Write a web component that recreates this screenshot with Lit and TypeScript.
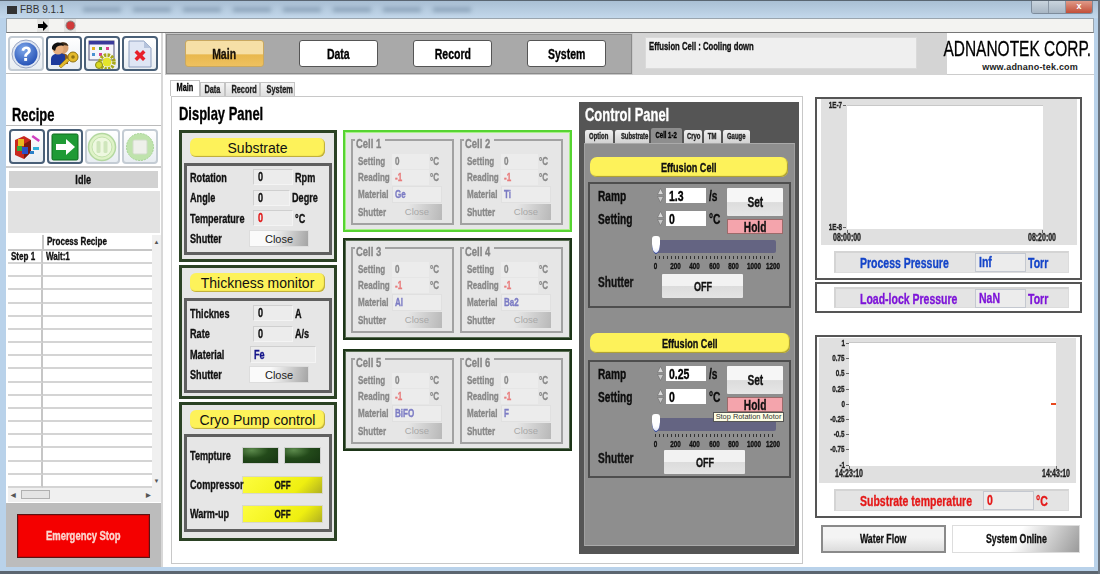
import { LitElement, html, css, svg, TemplateResult } from 'lit';
import { customElement } from 'lit/decorators.js';
import { classMap } from 'lit/directives/class-map.js';

const icons: Record<string, TemplateResult> = {
  help: svg`<defs><radialGradient id="hb" cx=".4" cy=".3" r=".8"><stop offset="0" stop-color="#7fa8ea"/><stop offset="1" stop-color="#1c48b0"/></radialGradient></defs>
    <circle cx="15" cy="15" r="14" fill="#dfe6f2" stroke="#9aa7c4"/><circle cx="15" cy="15" r="11.5" fill="url(#hb)"/>
    <path d="M10.5 11.5c.5-3 2.5-4 4.700-4 2.800 0 4.600 1.700 4.600 3.900 0 3.500-3.800 3.300-3.800 6.300h-2.800c0-4 3.600-4 3.600-6.200 0-1-.7-1.600-1.700-1.600-1.100 0-1.700.7-1.900 2z" fill="#fff"/><rect x="13.200" y="19" width="2.900" height="2.900" fill="#fff"/>`,
  users: svg`<path d="M12 14c3 0 7 1 7 4v7H7v-7c0-2 2-4 5-4z" fill="#8a5a20"/>
    <circle cx="14" cy="9" r="5.500" fill="#d8a070"/><path d="M8.500 8c0-5 9-7 11-1-3-1-7-1-8 1z" fill="#3a2a18"/>
    <path d="M6 15c3-1 8-1 10 1v10H2v-6c0-3 2-4 4-5z" fill="#1d3a9c"/><circle cx="9" cy="10" r="5.500" fill="#e8b080"/>
    <path d="M3 10C2 3 13 1 15 7c-4-1-7 0-8 2l-1 3z" fill="#111"/>
    <circle cx="24" cy="18" r="5" fill="#e3b92a" stroke="#8f7210"/><circle cx="24" cy="18" r="1.800" fill="#8f7210"/>
    <path d="M20.500 21.500 12 29l-2-2 8-8z" fill="#e3b92a" stroke="#8f7210" stroke-width=".6"/>`,
  panel: svg`<rect x="2" y="2" width="25" height="19" fill="#f4f4fa" stroke="#55557a"/><rect x="2" y="2" width="25" height="3.500" fill="#3a3a9a"/>
    <rect x="5" y="8" width="3" height="3" fill="#e0b020"/><rect x="12" y="8" width="3" height="3" fill="#3aa040"/><rect x="19" y="8" width="3" height="3" fill="#d8408a"/>
    <rect x="5" y="14" width="3" height="3" fill="#4a90d0"/><rect x="12" y="14" width="3" height="3" fill="#d8408a"/>
    <circle cx="20" cy="23" r="7" fill="none" stroke="#a8a818" stroke-width="3.500" stroke-dasharray="2.500 1.200"/><circle cx="20" cy="23" r="4.500" fill="#e4e42c"/><circle cx="12" cy="26" r="3.500" fill="#d8d820" stroke="#88881a"/>`,
  close: svg`<path d="M4 2h15l7 7v19H4z" fill="#dfe6f4" stroke="#8fa0c0"/><path d="M19 2v7h7z" fill="#b5c3dc"/>
    <path d="M9.500 13.500 12 11l3 3 3-3 2.500 2.500-3 3 3 3L18 22l-3-3-3 3-2.500-2.500 3-3z" fill="#e8202a"/>`,
  cubes: svg`<path d="M3 8l9-4 7 4v12l-7 7-9-4z" fill="#c8281e"/><path d="M12 12l7-4v12l-7 7z" fill="#7a1810"/>
    <rect x="6" y="7" width="6" height="7" fill="#e8b820"/><rect x="10" y="15" width="6" height="7" fill="#2a50c8"/><rect x="5" y="14" width="5" height="5" fill="#36a836"/>
    <path d="M21 3l7 5-1.500 2-7-5z" fill="#d040c0"/><rect x="21" y="15" width="6" height="3" fill="#30b0d8"/><rect x="18" y="19" width="4" height="3" fill="#2a80c8"/>`,
  go: svg`<rect x="2" y="2" width="26" height="26" rx="1.500" fill="#1f9a35" stroke="#0d6a1c"/><path d="M16 7l9 8-9 8v-5H6v-6h10z" fill="#fff"/>`,
  pause: svg`<circle cx="15" cy="15" r="13.500" fill="#dff3c8" stroke="#b4d8a0" stroke-width="1.500"/><circle cx="15" cy="15" r="10" fill="#eef8e0" stroke="#c4e2ae"/>
    <rect x="9.500" y="9" width="4" height="12" rx="1.500" fill="#cfe6bc"/><rect x="16.500" y="9" width="4" height="12" rx="1.500" fill="#cfe6bc"/>`,
  stop: svg`<circle cx="15" cy="15" r="13.500" fill="#bfe3ac" stroke="#a8d498" stroke-dasharray="2 1"/><rect x="8" y="8" width="14" height="14" rx="1.500" fill="#eef0ea" stroke="#d2dccb"/>`,
};

type Row = { label: string; value: string; unit?: string; red?: boolean };

const cells = [
  [['Cell 1', 'Ge'], ['Cell 2', 'Ti']],
  [['Cell 3', 'Al'], ['Cell 4', 'Ba2']],
  [['Cell 5', 'BiFO'], ['Cell 6', 'F']],
];
const scale = [0, 200, 400, 600, 800, 1000, 1200];
const ctrlTabs = ['Option', 'Substrate', 'Cell 1-2', 'Cryo', 'TM', 'Gauge'];
const tempTicks = ['1', '0.75', '0.5', '0.25', '0', '-0.25', '-0.5', '-0.75', '-1'];

// the app's condensed face is not installed, so squeeze Liberation Sans Bold
const n = (t: string) => html`<span class="n">${t}</span>`;
const nc = (t: string) => html`<span class="n mid">${t}</span>`;

const spin = html`<div class="spin">
  <svg width="7" height="7" viewBox="0 0 7 7"><path d="M3.500 .5 6.500 6.500H.5z" fill="#d8d8d8" stroke="#6e6e6e" stroke-width=".6"/></svg>
  <svg width="7" height="7" viewBox="0 0 7 7"><path d="M.5 .5h6l-3 6z" fill="#c8c8c8" stroke="#6e6e6e" stroke-width=".6"/></svg>
</div>`;

@customElement('app-root')
export class AppRoot extends LitElement {
  static styles = css`
    :host {
      display: block;
      width: 1100px;
      height: 574px;
      box-sizing: border-box;
      overflow: hidden;
      background: #b9d2ea;
      border-right: 2px solid #6a7480;
      font-family: 'Liberation Sans', sans-serif;
      font-weight: 700;
      font-size: 13px;
      color: #111;
    }
    .n {
      display: inline-block;
      flex: none;
      white-space: nowrap;
      transform: scaleX(0.7);
      transform-origin: left center;
      -webkit-text-stroke: 0.35px currentColor;
    }
    .n.mid {
      transform-origin: center;
    }
    .titlebar {
      height: 18px;
      display: flex;
      align-items: center;
      padding-left: 7px;
      gap: 3px;
      box-sizing: border-box;
      border-top: 1px solid #5a6672;
      background: linear-gradient(#a9bfd4, #c3d8eb);
      font: 400 10px 'Liberation Sans', sans-serif;
      color: #333;
    }
    .appicon {
      width: 10px;
      height: 8px;
      background: #333;
    }
    .crumbs {
      display: flex;
      gap: 12px;
      margin-left: 16px;
    }
    .crumbs i {
      width: 38px;
      height: 5px;
      background: #8ea5bb;
      filter: blur(2px);
    }
    .winbtns {
      margin-left: auto;
      margin-right: 5px;
      align-self: flex-start;
      display: flex;
      height: 12px;
      border: 1px solid #7d8c9c;
      border-top: 0;
      border-radius: 0 0 3px 3px;
      overflow: hidden;
    }
    .winbtns span {
      width: 16px;
      background: linear-gradient(#c9d4de, #a8b6c4);
      border-right: 1px solid #8b98a6;
    }
    .winbtns span.x {
      width: 26px;
      border: 0;
      background: linear-gradient(#e09a88, #c24f38);
      color: #fff;
      font: 700 9px/11px 'Liberation Sans', sans-serif;
      text-align: center;
    }
    .menubar {
      height: 15px;
      margin: 0 4px 0 6px;
      box-sizing: border-box;
      background: #f3f3f1;
      border: 1px solid #9aa5ae;
      border-bottom-color: #777;
      display: flex;
      padding-left: 30px;
      gap: 15px;
    }
    .menubar i {
      width: 12px;
      height: 13px;
      background: #e4e4e2;
      display: flex;
      align-items: center;
      justify-content: center;
    }
    .body {
      height: 534px;
      margin: 0 4px 0 6px;
      background: #fff;
      display: flex;
    }
    .frameend {
      height: 4px;
      border-bottom: 3px solid #5c6670;
    }

    /* left column */
    .left {
      width: 157px;
      flex: none;
      box-sizing: border-box;
      border-right: 2px solid #d8d8d8;
      display: flex;
      flex-direction: column;
    }
    .iconrow {
      display: flex;
      gap: 2px;
      padding: 3px 2px;
      height: 41px;
      box-sizing: border-box;
      border-bottom: 1px solid #bbb;
    }
    .iconrow.recipe {
      height: 43px;
      padding: 3px 3px 2px;
      border-top: 1px solid #bbb;
      border-bottom: 2px solid #ccc;
    }
    .ico {
      width: 36px;
      height: 35px;
      box-sizing: border-box;
      border: 2px solid #4a6078;
      border-radius: 4px;
      background: linear-gradient(#fff, #e8edf2);
      display: flex;
      align-items: center;
      justify-content: center;
    }
    .ico.soft {
      border-color: #c4ccd4;
    }
    .ico svg {
      width: 30px;
      height: 30px;
    }
    .recipetitle {
      height: 51px;
      display: flex;
      align-items: flex-end;
      padding: 0 0 1px 6px;
      box-sizing: border-box;
      font-size: 18.500px;
      line-height: 18px;
      color: #000;
    }
    .idle {
      margin: 3px 3px 0;
      width: 149px;
      height: 17px;
      background: #d2d2d2;
      display: flex;
      align-items: center;
      justify-content: center;
      font-size: 13px;
    }
    .graybox {
      margin: 3px 1px 0 2px;
      height: 42px;
      background: #e2e2e2;
    }
    .table {
      margin: 2px 0 0 2px;
      display: grid;
      grid-template-columns: 35px 109px 9px;
    }
    .thead {
      height: 14px;
      line-height: 13px;
      border-bottom: 2px solid #c6c6c6;
      font-size: 11.500px;
      padding-left: 4px;
      box-sizing: content-box;
    }
    .tcell {
      height: 11.170px;
      line-height: 11px;
      border-bottom: 2px solid #d4d4d4;
      padding-left: 3px;
      font-size: 11.500px;
      overflow: visible;
    }
    .c0 {
      border-right: 2px solid #c6c6c6;
      width: 30px;
    }
    .rows {
      grid-column: 1 / span 2;
      display: grid;
      grid-template-columns: 35px 109px;
    }
    .vscroll {
      background: #f0f0f0;
      grid-row: 1 / span 2;
      grid-column: 3;
      color: #555;
      font-size: 6px;
      display: flex;
      flex-direction: column;
      justify-content: space-between;
      align-items: center;
      padding: 4px 0;
    }
    .hscroll {
      margin-left: 2px;
      width: 153px;
      height: 14px;
      background: #f0f0f0;
      display: flex;
      align-items: center;
      font-size: 6px;
      color: #555;
      padding: 0 10px 0 3px;
      box-sizing: border-box;
      gap: 5px;
    }
    .hscroll span:last-child {
      margin-left: auto;
    }
    .hthumb {
      width: 29px;
      height: 9px;
      border: 1px solid #b0b0b0;
      background: #e4e4e4;
      box-sizing: border-box;
    }
    .estopwrap {
      flex: 1;
      margin-top: 1px;
      background: #bcbcbc;
      padding: 11px 0 0 11px;
    }
    .estop {
      width: 133px;
      height: 44px;
      box-sizing: border-box;
      background: #f40000;
      border: 1px solid #5a1414;
      box-shadow: inset 0 0 0 1px #d80000;
      color: #fbd7d0;
      display: flex;
      align-items: center;
      justify-content: center;
      font-size: 13.500px;
    }

    /* top strip */
    .center {
      flex: 1;
      display: flex;
      flex-direction: column;
      min-width: 0;
    }
    .top {
      display: flex;
      height: 42px;
      margin-left: 2px;
    }
    .nav {
      width: 468px;
      flex: none;
      box-sizing: border-box;
      background: #a9a9a9;
      border: 2px solid #8a8a8a;
      outline: 1px solid #c8c8c8;
      outline-offset: -1px;
      display: flex;
      gap: 35px;
      padding: 5px 0 0 18px;
    }
    .navbtn {
      width: 79px;
      height: 27px;
      box-sizing: border-box;
      background: #fff;
      border: 1px solid #555;
      border-radius: 3px;
      display: flex;
      align-items: center;
      justify-content: center;
      font-size: 15px;
      color: #000;
    }
    .navbtn.on {
      background: linear-gradient(#f6dfa6 0 50%, #e9b84e 56%, #eec160);
      border-color: #c9a860;
      color: #1a1208;
    }
    .status {
      width: 314px;
      flex: none;
      background: #d4d4d4;
      padding: 4px 0 0 12px;
      box-sizing: border-box;
    }
    .statusbox {
      width: 272px;
      height: 32px;
      box-sizing: border-box;
      background: #efefef;
      border: 1px solid #dadada;
      padding: 2px 3px;
      font-size: 11px;
      color: #111;
    }
    .logo {
      flex: 1;
      min-width: 0;
      display: flex;
      flex-direction: column;
      align-items: flex-end;
      border-bottom: 1px solid #ccc;
      padding-right: 3px;
      box-sizing: border-box;
    }
    .logo b {
      display: inline-block;
      flex: none;
      font: 400 21.500px 'Liberation Sans', sans-serif;
      white-space: nowrap;
      -webkit-text-stroke: 0.3px #000;
      transform: scaleX(0.72);
      transform-origin: right center;
      margin-top: 4px;
      line-height: 24px;
      color: #000;
    }
    .logo small {
      font: 700 9px 'Liberation Sans', sans-serif;
      letter-spacing: 0.2px;
      margin: 1px 13px 0 0;
      color: #222;
    }

    /* tabs */
    .work {
      flex: 1;
      display: flex;
      padding: 6px 0 0 3px;
    }
    .tabspanel {
      margin-left: 5px;
      width: 632px;
    }
    .tabs {
      display: grid;
      grid-template-columns: 30px 25px 35px 35px;
      height: 15px;
      position: relative;
      z-index: 1;
      margin-left: -1px;
    }
    .tab {
      height: 14px;
      margin-top: 1px;
      box-sizing: border-box;
      border: 1px solid #c4c4c4;
      border-bottom: 0;
      background: linear-gradient(#f5f5f5, #dedede);
      font-size: 10.500px;
      line-height: 13px;
      text-align: center;
      color: #222;
    }
    .tab.on {
      background: #fff;
      height: 16px;
      margin-top: -1px;
      color: #000;
    }
    .panel {
      width: 632px;
      height: 468px;
      box-sizing: border-box;
      border: 1px solid #c8c8c8;
      display: flex;
      padding: 0 0 0 7px;
    }
    .col1 {
      width: 158px;
      margin-right: 6px;
      flex: none;
    }
    .col2 {
      width: 229px;
      margin-right: 7px;
      padding-top: 33px;
      flex: none;
    }
    .h1 {
      height: 33px;
      font-size: 18.500px;
      line-height: 34px;
      color: #000;
    }

    /* display panels */
    .dp {
      box-sizing: border-box;
      border: 3px solid #2b4224;
      background: #e6e6e6;
      padding: 5px 2px 0;
      margin-bottom: 3px;
    }
    .dp.sub {
      height: 132px;
    }
    .dp.thick {
      height: 134px;
    }
    .dp.cryo {
      height: 139px;
    }
    .pill {
      margin: 0 7px 0 6px;
      height: 19px;
      border-radius: 6px;
      background: #fdf25a;
      box-shadow: inset -1px -1px 1px #bba93a;
      display: flex;
      align-items: center;
      justify-content: center;
      font: 400 14px 'Liberation Sans', sans-serif;
      color: #111;
    }
    .inner {
      margin-top: 6px;
      border: 3px solid #5f5f5f;
      padding: 1px 0 0 3px;
      box-sizing: border-box;
      height: 92px;
    }
    .thick .inner {
      height: 95px;
      padding-top: 2px;
    }
    .cryo .inner {
      height: 98px;
      margin-top: 5px;
      padding-top: 3px;
    }
    .kv {
      display: flex;
      align-items: center;
      height: 20.500px;
      font-size: 13px;
    }
    .kv > label {
      width: 63px;
      flex: none;
    }
    .num {
      width: 40px;
      height: 16px;
      box-sizing: border-box;
      background: #ececec;
      border: 1px solid;
      border-color: #cfcfcf #f4f4f4 #f4f4f4 #cfcfcf;
      padding-left: 4px;
      line-height: 14px;
      margin-right: 2px;
    }
    .red {
      color: #e01818;
    }
    .mat {
      width: 66px;
      height: 17px;
      box-sizing: border-box;
      background: #ececec;
      border: 1px solid;
      border-color: #cfcfcf #f4f4f4 #f4f4f4 #cfcfcf;
      padding-left: 3px;
      line-height: 15px;
      color: #14148a;
      margin-left: -3px;
    }
    .closebtn {
      width: 60px;
      height: 17px;
      margin-left: -4px;
      background: linear-gradient(100deg, #fafafa 35%, #a4a4a4);
      border: 1px solid #ddd;
      box-sizing: border-box;
      display: flex;
      align-items: center;
      justify-content: center;
      font: 400 11px 'Liberation Sans', sans-serif;
      color: #222;
    }
    .led {
      width: 37px;
      height: 17px;
      margin-right: 5px;
      background: radial-gradient(ellipse at 25% 15%, #5c8a4c, #234a1a 45%, #163412);
      border: 1px solid #cfcfcf;
      box-sizing: border-box;
    }
    .yellowbtn {
      width: 81px;
      height: 18px;
      box-sizing: border-box;
      background: linear-gradient(135deg, #fdfd3e, #efef10 70%, #b0b020);
      border: 1px solid #d8d8c8;
      display: flex;
      align-items: center;
      justify-content: center;
      font-size: 11.500px;
    }
    .cryo .kv {
      height: 29px;
    }
    .cryo .kv:first-child {
      margin-top: 1px;
    }
    .cryo .kv > label {
      width: 52px;
    }

    /* cells */
    .cp {
      box-sizing: border-box;
      height: 102px;
      border: 3px solid #1d3518;
      outline: 1px solid #5a6e54;
      outline-offset: -3px;
      background: #e6e6e6;
      margin-bottom: 6px;
      display: flex;
      gap: 6px;
      padding: 6px 0 0 5px;
    }
    .cp.active {
      border-color: #56d432;
      outline-color: #a8f088;
    }
    .cp:last-child {
      margin-top: 9px;
    }
    .cellbox {
      position: relative;
      width: 103px;
      height: 86px;
      box-sizing: border-box;
      border: 2px solid #a2a2a2;
      padding: 12px 0 0 5px;
      color: #888;
      font-size: 11.500px;
    }
    .legend {
      position: absolute;
      top: -5px;
      left: 2px;
      width: 26px;
      padding: 0 3px 0 1px;
      background: #e6e6e6;
      font-size: 13.500px;
      line-height: 15px;
      color: #858585;
    }
    .cr {
      display: flex;
      align-items: center;
      height: 16px;
    }
    .cr label {
      width: 34px;
      flex: none;
    }
    .cr.m {
      height: 18px;
    }
    .cr.s {
      height: 17px;
    }
    .cr .cv {
      width: 37px;
      height: 15px;
      line-height: 15px;
      background: #ececec;
      padding-left: 3px;
      box-sizing: border-box;
      margin-right: 1px;
    }
    .cr .cm {
      width: 50px;
      height: 17px;
      line-height: 15px;
      background: #ececec;
      border: 1px solid #e0e0e0;
      padding-left: 2px;
      box-sizing: border-box;
      color: #7c7cc4;
    }
    .cr .cb {
      width: 50px;
      height: 16px;
      background: linear-gradient(100deg, #e6e6e6 30%, #b8b8b8);
      display: flex;
      align-items: center;
      justify-content: center;
      font: 400 9.500px 'Liberation Sans', sans-serif;
      color: #a8a8a8;
    }
    .lred {
      color: #e87c7c;
    }

    /* control panel */
    .ctrl {
      margin-top: 5px;
      width: 220px;
      height: 452px;
      flex: none;
      box-sizing: border-box;
      background: #555;
      padding: 0 4px 8px 5px;
      display: flex;
      flex-direction: column;
    }
    .ctrl h2 {
      margin: 0;
      height: 28px;
      line-height: 26px;
      padding-left: 1px;
      font-size: 18.500px;
      color: #fff;
    }
    .ctabs {
      display: grid;
      grid-template-columns: 28px 34px 31px 18px 17px 27px;
      gap: 2px;
      height: 13px;
      padding-left: 1px;
    }
    .ctabs span.tabt {
      background: linear-gradient(#f0f0f0, #cfcfcf);
      font-size: 8.500px;
      line-height: 13px;
      text-align: center;
      color: #222;
      border-radius: 2px 2px 0 0;
      overflow: visible;
    }
    .ctabs span.tabt.on {
      background: #8e8e8e;
      color: #000;
      margin-top: -2px;
      line-height: 14px;
      height: 16px;
    }
    .cbody {
      flex: 1;
      background: #8e8e8e;
      border-top: 1px solid #aaa;
      border-left: 1px solid #a0a0a0;
      border-right: 1px solid #a0a0a0;
      border-bottom: 1px solid #aaa;
      padding: 13px 3px 0 3px;
    }
    .cpill {
      height: 20px;
      margin: 0 3px 0 2px;
      border-radius: 7px;
      background: #fdf25a;
      box-shadow: inset -1px -1px 1px #a89a30;
      display: flex;
      align-items: center;
      justify-content: center;
      font-size: 13px;
      color: #111;
    }
    .cpill.two {
      margin-top: 25px;
      margin-right: 1px;
    }
    .cbox {
      margin-top: 5px;
      height: 126px;
      box-sizing: border-box;
      border: 2px solid #4e4e4e;
      padding: 4px 0 0 8px;
      position: relative;
    }
    .cbox.two {
      margin-top: 7px;
      height: 118px;
    }
    .cols {
      display: flex;
    }
    .cfields {
      width: 129px;
      flex: none;
      display: flex;
      flex-direction: column;
      gap: 8px;
    }
    .cfield {
      display: flex;
      align-items: center;
      height: 15px;
      font-size: 14.500px;
      color: #0c0c0c;
    }
    .cfield label {
      width: 59px;
      flex: none;
    }
    .spin {
      width: 9px;
      flex: none;
      display: flex;
      flex-direction: column;
      align-items: flex-start;
      gap: 1px;
    }
    .spin svg {
      display: block;
    }
    .inp {
      width: 40px;
      height: 15px;
      box-sizing: border-box;
      background: #fff;
      padding-left: 3px;
      line-height: 15px;
      font-size: 15px;
      margin-right: 3px;
      color: #000;
    }
    .btns {
      display: flex;
      flex-direction: column;
      gap: 3px;
      width: 56px;
    }
    .setbtn {
      height: 28px;
      background: linear-gradient(#f6f6f6 50%, #dcdcdc 52%, #e6e6e6);
      display: flex;
      align-items: center;
      justify-content: center;
      font-size: 14.500px;
      border-radius: 1px;
    }
    .holdbtn {
      height: 15px;
      box-sizing: border-box;
      background: #f4a4ac;
      border: 1px solid #9c6a6a;
      display: flex;
      align-items: center;
      justify-content: center;
      font-size: 14.500px;
    }
    .slider {
      position: relative;
      margin: 2px 0 0 54px;
      width: 124px;
      height: 18px;
    }
    .track {
      position: absolute;
      left: 4px;
      right: 0;
      top: 4px;
      height: 13px;
      background: #646482;
      border-radius: 2px;
    }
    .thumb {
      position: absolute;
      left: 0;
      top: 0;
      width: 8px;
      height: 18px;
      background: linear-gradient(#fff 70%, #dfe4f8);
      border-radius: 3px 3px 4px 4px / 3px 3px 10px 10px;
      border-bottom: 1px solid #223a9a;
      box-sizing: border-box;
    }
    .ticks {
      margin: 2px 0 0 57px;
      width: 118px;
      height: 3px;
      background: repeating-linear-gradient(90deg, #333 0 1px, transparent 1px 3.900px);
    }
    .scale {
      margin: 2px 0 0 48px;
      display: grid;
      grid-template-columns: repeat(7, 19.500px);
      font-size: 9px;
      line-height: 10px;
      text-align: center;
      color: #111;
    }
    .shut {
      display: flex;
      align-items: flex-start;
      margin-top: 3px;
      font-size: 14.500px;
    }
    .two .shut {
      margin-top: 1px;
    }
    .shut label {
      width: 64px;
    }
    .two .shut label {
      width: 66px;
    }
    .offbtn {
      width: 81px;
      height: 24px;
      background: linear-gradient(#f2f2f2 50%, #dcdcdc 52%, #e4e4e4);
      display: flex;
      align-items: center;
      justify-content: center;
      font-size: 13px;
      border-radius: 1px;
    }
    .tip {
      position: absolute;
      left: 123px;
      top: 50px;
      width: 71px;
      height: 10px;
      box-sizing: border-box;
      background: #fdfde4;
      border: 1px solid #555;
      font: 400 7.400px/8px 'Liberation Sans', sans-serif;
      color: #333;
      white-space: nowrap;
      text-align: center;
      z-index: 2;
    }

    /* right column */
    .rightcol {
      margin-left: 12px;
      width: 267px;
      padding-top: 16px;
      flex: none;
    }
    .rbox {
      box-sizing: border-box;
      border: 2px solid #555;
      background: #fff;
    }
    .rbox.press {
      height: 183px;
      padding: 0 3px 0 4px;
    }
    .rbox.load {
      height: 31px;
      margin-top: 2px;
      padding: 3px 0 0 17px;
    }
    .rbox.temp {
      height: 183px;
      margin-top: 22px;
      padding: 1px 4px 0 2px;
    }
    .chart {
      position: relative;
      height: 146px;
      background: #e0e0e0;
    }
    .temp .chart {
      height: 145px;
    }
    .plot {
      position: absolute;
      background: #fff;
      border-top: 1px solid #c8c8c8;
      box-sizing: border-box;
    }
    .press .plot {
      left: 26px;
      top: 6px;
      width: 196px;
      height: 124px;
    }
    .temp .plot {
      left: 30px;
      top: 4px;
      width: 207px;
      height: 124px;
    }
    .yl {
      position: absolute;
      font-size: 9px;
      line-height: 9px;
      text-align: right;
      color: #222;
      white-space: nowrap;
    }
    .yl .n {
      transform-origin: right center;
    }
    .yl::after {
      content: '';
      position: absolute;
      right: -4px;
      top: 4px;
      width: 3px;
      height: 1px;
      background: #666;
    }
    .yl.hi {
      right: 235px;
      top: 2px;
    }
    .yl.lo {
      right: 235px;
      top: 124px;
    }
    .temp .yl {
      right: 231px;
    }
    .xl {
      position: absolute;
      font-size: 10px;
      line-height: 9px;
      transform: translateX(-50%);
      color: #222;
    }
    .xl::before {
      content: '';
      position: absolute;
      left: 50%;
      top: -3px;
      width: 1px;
      height: 3px;
      background: #666;
    }
    .xl.a {
      left: 26px;
      top: 134px;
    }
    .xl.b {
      left: 221px;
      top: 134px;
    }
    .xl.c {
      left: 30px;
      top: 131px;
    }
    .xl.d {
      left: 237px;
      top: 131px;
    }
    .dash {
      position: absolute;
      left: 202px;
      top: 60px;
      width: 5px;
      height: 2px;
      background: #e8481e;
    }
    .readout {
      width: 235px;
      height: 22px;
      box-sizing: border-box;
      background: #e4e4e4;
      border: 1px solid #dcdcdc;
      border-top: 2px solid #d4d4d4;
      border-left: 2px solid #d4d4d4;
      display: flex;
      align-items: center;
      font-size: 15px;
    }
    .press .readout {
      margin: 6px 0 0 13px;
    }
    .temp .readout {
      margin: 6px 0 0 15px;
    }
    .load .readout {
      height: 21px;
    }
    .readout .name {
      width: 115px;
      flex: none;
      padding-left: 24px;
      white-space: nowrap;
    }
    .temp .readout .name {
      width: 123px;
    }
    .readout .val {
      width: 51px;
      height: 19px;
      box-sizing: border-box;
      background: #ececec;
      border: 1px solid #c4c8d0;
      padding-left: 3px;
      line-height: 16px;
      margin-right: 2px;
    }
    .blue {
      color: #1444c8;
    }
    .purple {
      color: #7d14d8;
    }
    .rtemp {
      color: #e41818;
    }
    .foot {
      display: flex;
      gap: 6px;
      padding: 7px 0 0 6px;
    }
    .foot div {
      width: 125px;
      height: 28px;
      box-sizing: border-box;
      display: flex;
      align-items: center;
      justify-content: center;
      font-size: 12.500px;
    }
    .foot .wf {
      background: linear-gradient(#f4f4f4 45%, #dcdcdc);
      border: 2px solid #8a8a8a;
    }
    .foot .so {
      width: 128px;
      background: linear-gradient(120deg, #fff 50%, #9a9a9a);
      border: 1px solid #ddd;
    }
  `;

  private ico(name: string, soft = false) {
    return html`<div class=${classMap({ ico: true, soft })}>
      <svg viewBox="0 0 30 30">${icons[name]}</svg>
    </div>`;
  }

  private kv(r: Row) {
    return html`<div class="kv">
      <label>${n(r.label)}</label>
      <div class=${classMap({ num: true, red: !!r.red })}>${n(r.value)}</div>
      ${r.unit ? n(r.unit) : ''}
    </div>`;
  }

  private cell(name: string, material: string) {
    return html`<div class="cellbox">
      <div class="legend">${n(name)}</div>
      <div class="cr"><label>${n('Setting')}</label><div class="cv">${n('0')}</div>${n('°C')}</div>
      <div class="cr"><label>${n('Reading')}</label><div class="cv lred">${n('-1')}</div>${n('°C')}</div>
      <div class="cr m"><label>${n('Material')}</label><div class="cm">${n(material)}</div></div>
      <div class="cr s"><label>${n('Shutter')}</label><div class="cb">Close</div></div>
    </div>`;
  }

  private effusion(ramp: string, two: boolean) {
    return html`<div class=${classMap({ cpill: true, two })}>${nc('Effusion Cell')}</div>
      <div class=${classMap({ cbox: true, two })}>
        <div class="cols">
          <div class="cfields">
            <div class="cfield">
              <label>${n('Ramp')}</label>
              ${spin}
              <div class="inp">${n(ramp)}</div>
              ${n('/s')}
            </div>
            <div class="cfield">
              <label>${n('Setting')}</label>
              ${spin}
              <div class="inp">${n('0')}</div>
              ${n('°C')}
            </div>
          </div>
          <div class="btns">
            <div class="setbtn">${nc('Set')}</div>
            <div class="holdbtn">${nc('Hold')}</div>
          </div>
        </div>
        <div class="slider"><div class="track"></div><div class="thumb"></div></div>
        <div class="ticks"></div>
        <div class="scale">${scale.map((s) => html`<div>${nc(String(s))}</div>`)}</div>
        <div class="shut"><label>${n('Shutter')}</label><div class="offbtn">${nc('OFF')}</div></div>
        ${two ? html`<div class="tip">Stop Rotation Motor</div>` : ''}
      </div>`;
  }

  private pressChart() {
    return html`<div class="chart">
      <div class="plot"></div>
      <div class="yl hi">${n('1E-7')}</div>
      <div class="yl lo">${n('1E-8')}</div>
      <div class="xl a">${nc('08:00:00')}</div>
      <div class="xl b">${nc('08:20:00')}</div>
    </div>`;
  }

  private tempChart() {
    return html`<div class="chart">
      <div class="plot"><div class="dash"></div></div>
      ${tempTicks.map(
        (t, i) => html`<div class="yl" style="top:${1 + i * 15.2}px">${n(t)}</div>`
      )}
      <div class="xl c">${nc('14:23:10')}</div>
      <div class="xl d">${nc('14:43:10')}</div>
    </div>`;
  }

  render(): TemplateResult {
    return html`
      <div class="titlebar">
        <span class="appicon"></span><span>FBB 9.1.1</span>
        <div class="crumbs"><i></i><i></i><i></i><i></i><i></i><i></i><i></i><i></i></div>
        <div class="winbtns"><span></span><span></span><span class="x">x</span></div>
      </div>
      <div class="menubar">
        <i><svg width="10" height="10" viewBox="0 0 10 10"><path d="M0 3h5V0l5 5-5 5V7H0z" fill="#000"/></svg></i>
        <i><svg width="11" height="11" viewBox="0 0 11 11"><circle cx="5.500" cy="5.500" r="4.500" fill="#d03a3a" stroke="#888"/></svg></i>
      </div>
      <div class="body">
        <div class="left">
          <div class="iconrow">
            ${this.ico('help', true)}${this.ico('users')}${this.ico('panel')}${this.ico('close')}
          </div>
          <div class="recipetitle">${n('Recipe')}</div>
          <div class="iconrow recipe">
            ${this.ico('cubes')}${this.ico('go')}${this.ico('pause', true)}${this.ico('stop', true)}
          </div>
          <div class="idle">${nc('Idle')}</div>
          <div class="graybox"></div>
          <div class="table">
            <div class="thead c0"></div>
            <div class="thead">${n('Process Recipe')}</div>
            <div class="vscroll"><span>▲</span><span>▼</span></div>
            <div class="rows">
              ${Array.from({ length: 18 }, (_, i) => html`
                <div class="tcell c0">${i === 0 ? n('Step 1') : ''}</div>
                <div class="tcell">${i === 0 ? n('Wait:1') : ''}</div>
              `)}
            </div>
          </div>
          <div class="hscroll"><span>◀</span><div class="hthumb"></div><span>▶</span></div>
          <div class="estopwrap"><div class="estop">${nc('Emergency Stop')}</div></div>
        </div>
        <div class="center">
          <div class="top">
            <div class="nav">
              <div class="navbtn on">${nc('Main')}</div>
              <div class="navbtn">${nc('Data')}</div>
              <div class="navbtn">${nc('Record')}</div>
              <div class="navbtn">${nc('System')}</div>
            </div>
            <div class="status"><div class="statusbox">${n('Effusion Cell : Cooling down')}</div></div>
            <div class="logo"><b>ADNANOTEK CORP.</b><small>www.adnano-tek.com</small></div>
          </div>
          <div class="work">
            <div class="tabspanel">
              <div class="tabs">
                <div class="tab on">${nc('Main')}</div>
                <div class="tab">${nc('Data')}</div>
                <div class="tab">${nc('Record')}</div>
                <div class="tab">${nc('System')}</div>
              </div>
              <div class="panel">
                <div class="col1">
                  <div class="h1">${n('Display Panel')}</div>
                  <div class="dp sub">
                    <div class="pill">Substrate</div>
                    <div class="inner">
                      ${this.kv({ label: 'Rotation', value: '0', unit: 'Rpm' })}
                      ${this.kv({ label: 'Angle', value: '0', unit: 'Degre' })}
                      ${this.kv({ label: 'Temperature', value: '0', unit: '°C', red: true })}
                      <div class="kv"><label>${n('Shutter')}</label><div class="closebtn">Close</div></div>
                    </div>
                  </div>
                  <div class="dp thick">
                    <div class="pill">Thickness monitor</div>
                    <div class="inner">
                      ${this.kv({ label: 'Thicknes', value: '0', unit: 'A' })}
                      ${this.kv({ label: 'Rate', value: '0', unit: 'A/s' })}
                      <div class="kv"><label>${n('Material')}</label><div class="mat">${n('Fe')}</div></div>
                      <div class="kv"><label>${n('Shutter')}</label><div class="closebtn">Close</div></div>
                    </div>
                  </div>
                  <div class="dp cryo">
                    <div class="pill">Cryo Pump control</div>
                    <div class="inner">
                      <div class="kv"><label>${n('Tempture')}</label><div class="led"></div><div class="led"></div></div>
                      <div class="kv"><label>${n('Compressor')}</label><div class="yellowbtn">${nc('OFF')}</div></div>
                      <div class="kv"><label>${n('Warm-up')}</label><div class="yellowbtn">${nc('OFF')}</div></div>
                    </div>
                  </div>
                </div>
                <div class="col2">
                  ${cells.map(
                    (row, i) => html`<div class=${classMap({ cp: true, active: i === 0 })}>
                      ${row.map(([name, m]) => this.cell(name, m))}
                    </div>`
                  )}
                </div>
                <div class="ctrl">
                  <h2>${n('Control Panel')}</h2>
                  <div class="ctabs">
                    ${ctrlTabs.map(
                      (t) => html`<span class=${classMap({ tabt: true, on: t === 'Cell 1-2' })}>${nc(t)}</span>`
                    )}
                  </div>
                  <div class="cbody">
                    ${this.effusion('1.3', false)}
                    ${this.effusion('0.25', true)}
                  </div>
                </div>
              </div>
            </div>
            <div class="rightcol">
              <div class="rbox press">
                ${this.pressChart()}
                <div class="readout blue">
                  <span class="name">${n('Process Pressure')}</span><span class="val">${n('Inf')}</span>${n('Torr')}
                </div>
              </div>
              <div class="rbox load">
                <div class="readout purple">
                  <span class="name">${n('Load-lock Pressure')}</span><span class="val">${n('NaN')}</span>${n('Torr')}
                </div>
              </div>
              <div class="rbox temp">
                ${this.tempChart()}
                <div class="readout rtemp">
                  <span class="name">${n('Substrate temperature')}</span><span class="val">${n('0')}</span>${n('°C')}
                </div>
              </div>
              <div class="foot">
                <div class="wf">${nc('Water Flow')}</div>
                <div class="so">${nc('System Online')}</div>
              </div>
            </div>
          </div>
        </div>
      </div>
      <div class="frameend"></div>
    `;
  }
}

declare global {
  interface HTMLElementTagNameMap {
    'app-root': AppRoot;
  }
}
